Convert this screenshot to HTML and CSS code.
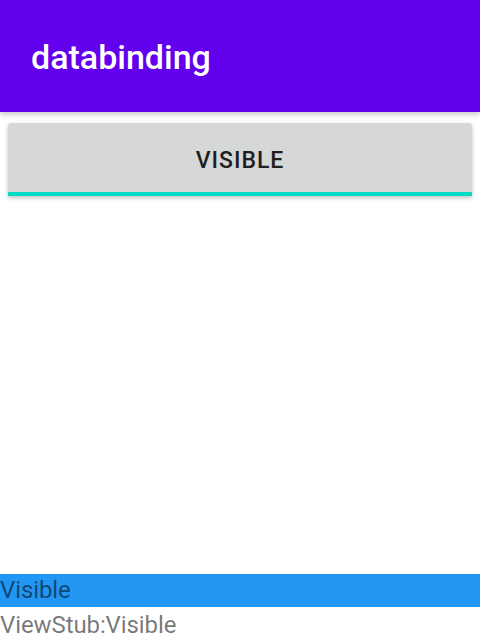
FILE: index.html
```html
<!DOCTYPE html>
<html>
<head>
<meta charset="utf-8">
<link rel="stylesheet" href="styles.css">
</head>
<body>
<div class="screen">
  <header class="appbar"><span class="title">databinding</span></header>
  <main class="content">
    <div class="btn-wrap">
      <button class="btn">VISIBLE</button>
    </div>
  </main>
  <div class="row row-blue">Visible</div>
  <div class="row row-stub">ViewStub:Visible</div>
</div>
</body>
</html>
```
FILE: styles.css
```css
html, body {
  margin: 0;
  padding: 0;
  background: #ffffff;
}
.screen {
  width: 480px;
  height: 640px;
  display: flex;
  flex-direction: column;
  font-family: Roboto, "Liberation Sans", sans-serif;
  overflow: hidden;
}
.appbar {
  height: 112px;
  flex: none;
  background: #6200ee;
  display: flex;
  align-items: center;
  padding-left: 31px;
  box-shadow: 0 2px 6px rgba(0,0,0,0.25);
  position: relative;
  z-index: 1;
}
.title {
  color: #ffffff;
  font-size: 34px;
  font-weight: 500;
  margin-top: 2px;
}
.content {
  flex: 1;
}
.btn-wrap {
  padding: 11px 8px 0 8px;
}
.btn {
  display: block;
  width: 100%;
  height: 73px;
  border: none;
  border-bottom: 4px solid #03dac5;
  border-radius: 3px 3px 0 0;
  background: #d6d7d7;
  color: #1f1f1f;
  font-family: Roboto, "Liberation Sans", sans-serif;
  font-size: 23px;
  font-weight: 500;
  letter-spacing: 1px;
  padding: 6px 0 0 0;
  box-shadow: 0 2px 4px rgba(0,0,0,0.25);
}
.row {
  height: 33px;
  line-height: 33px;
  font-size: 24px;
  color: rgba(0,0,0,0.54);
  flex: none;
  letter-spacing: -0.1px;
}
.row-blue {
  background: #2196f3;
}
.row-stub {
  height: 31px;
  padding-top: 2px;
  line-height: 33px;
}
```
